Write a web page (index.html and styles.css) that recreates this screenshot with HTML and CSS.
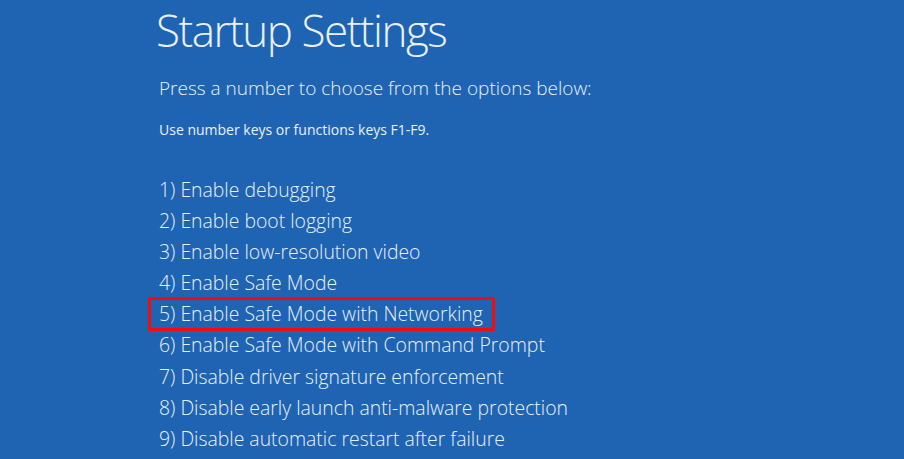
FILE: index.html
```html
<!DOCTYPE html>
<html>
<head>
    <link rel="stylesheet" href="styles.css">
</head>
<body>
    <div class="screen">
        <h1>Startup Settings</h1>
        <p class="lead">Press a number to choose from the options below:</p>
        <p class="hint">Use number keys or functions keys F1-F9.</p>
        <ul class="options">
            <li>1) Enable debugging</li>
            <li>2) Enable boot logging</li>
            <li>3) Enable low-resolution video</li>
            <li>4) Enable Safe Mode</li>
            <li class="marked">5) Enable Safe Mode with Networking</li>
            <li>6) Enable Safe Mode with Command Prompt</li>
            <li>7) Disable driver signature enforcement</li>
            <li>8) Disable early launch anti-malware protection</li>
            <li>9) Disable automatic restart after failure</li>
        </ul>
    </div>
</body>
</html>
```

FILE: styles.css
```css
body {
    margin: 0;
    padding: 0;
    background-color: #1f64b2;
    color: #eaf0f8;
    font-family: "Open Sans", "Noto Sans", sans-serif;
    overflow: hidden;
}

.screen {
    padding-left: 156px;
    padding-top: 0;
}

h1 {
    margin: 0;
    font-size: 44px;
    font-weight: 300;
    letter-spacing: -1.5px;
    line-height: 60px;
}

.lead {
    margin: 15px 0 0 3px;
    font-size: 19px;
    font-weight: 300;
    line-height: 26px;
}

.hint {
    margin: 20px 0 0 3px;
    font-size: 14px;
    font-weight: 400;
    line-height: 18px;
}

.options {
    list-style: none;
    margin: 35px 0 0 3px;
    padding: 0;
}

.options li {
    font-size: 19.4px;
    font-weight: 300;
    line-height: 31.1px;
}

.marked {
    display: inline-block;
    position: relative;
}

.marked::after {
    content: "";
    position: absolute;
    left: -11px;
    right: -12px;
    top: -1px;
    bottom: -2px;
    border: 3px solid #f40b0b;
}
```
